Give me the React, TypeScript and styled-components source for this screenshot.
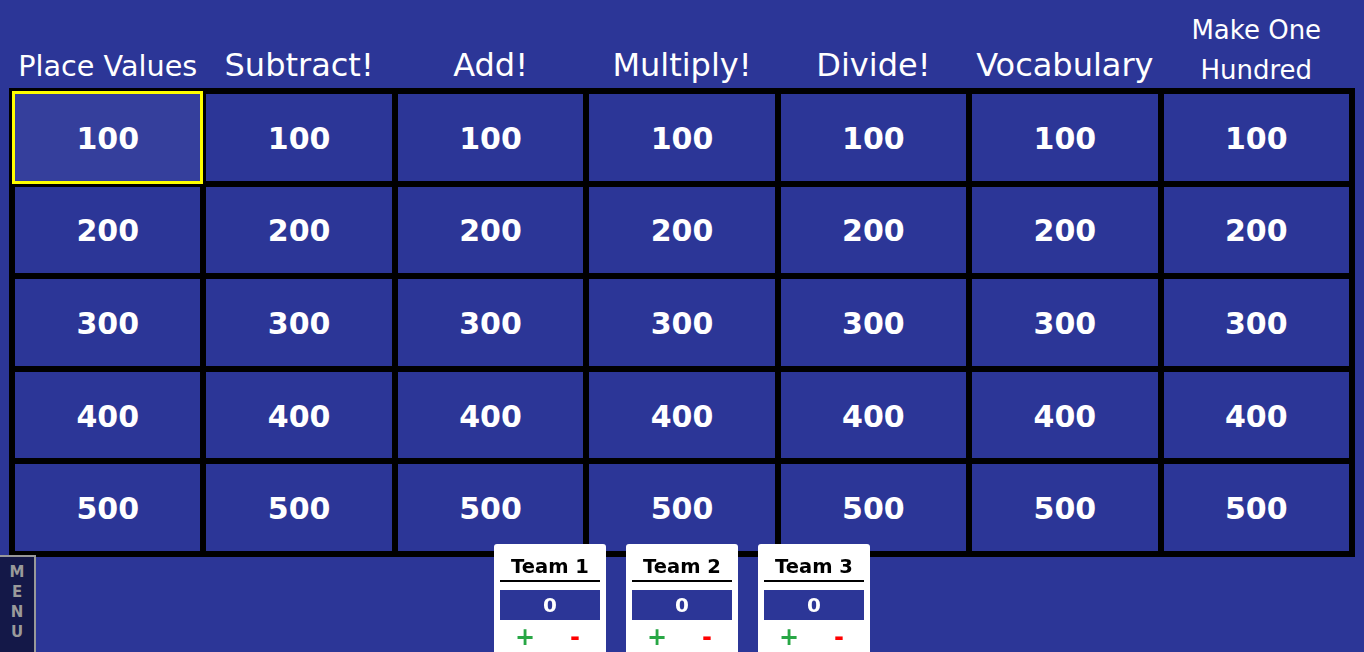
import React from "react";
import styled, { createGlobalStyle } from "styled-components";

const BG = "#2c3697";

const Global = createGlobalStyle`
  html, body {
    margin: 0;
    padding: 0;
    background: ${BG};
    overflow: hidden;
    font-family: "DejaVu Sans", Verdana, sans-serif;
  }
`;

const Page = styled.div`
  width: 1364px;
  height: 652px;
  padding: 0 9px;
  box-sizing: border-box;
  display: flex;
  flex-direction: column;
`;

const HeaderRow = styled.div`
  height: 88px;
  padding: 0 3px;
  display: grid;
  grid-template-columns: repeat(7, 1fr);
`;

const HeaderCell = styled.div`
  display: flex;
  align-items: flex-end;
  justify-content: center;
  text-align: center;
  color: #fff;
  padding: 0 4px;
  min-width: 0;
`;

const HeaderText = styled.span<{ $size: number; $lh: number; $mb: number }>`
  font-size: ${(p) => p.$size}px;
  line-height: ${(p) => p.$lh}px;
  margin-bottom: ${(p) => p.$mb}px;
`;

const Board = styled.div`
  height: 469px;
  box-sizing: border-box;
  border: 3px solid #000;
  display: grid;
  grid-template-columns: repeat(7, 1fr);
  grid-template-rows: repeat(5, 1fr);
`;

const Cell = styled.div<{ $selected?: boolean }>`
  border: 3px solid ${(p) => (p.$selected ? "#ffff00" : "#000")};
  background: ${(p) => (p.$selected ? "#353f9c" : BG)};
  display: flex;
  align-items: center;
  justify-content: center;
  color: #fff;
  font-weight: bold;
  font-size: 30px;
  padding-top: 2px;
  min-width: 0;
`;

const Teams = styled.div`
  position: fixed;
  left: 0;
  right: 0;
  top: 544px;
  display: flex;
  justify-content: center;
  gap: 20px;
`;

const TeamCard = styled.div`
  width: 112px;
  height: 130px;
  box-sizing: border-box;
  background: #fff;
  border-radius: 3px 3px 0 0;
  padding: 10px 6px 6px;
  display: flex;
  flex-direction: column;
`;

const TeamName = styled.div`
  font-weight: bold;
  font-size: 19.5px;
  line-height: 26px;
  color: #000;
  text-align: center;
  border-bottom: 2px solid #000;
`;

const Score = styled.div`
  margin-top: 8px;
  height: 30px;
  line-height: 30px;
  background: ${BG};
  color: #fff;
  font-weight: bold;
  font-size: 20px;
  text-align: center;
`;

const Controls = styled.div`
  margin-top: 3px;
  display: flex;
`;

const Adjust = styled.span<{ $color: string }>`
  flex: 1;
  text-align: center;
  font-weight: bold;
  font-size: 24px;
  line-height: 28px;
  color: ${(p) => p.$color};
`;

const MenuTab = styled.div`
  position: fixed;
  left: 0;
  top: 555px;
  bottom: 0;
  width: 34px;
  background: #141848;
  border-top: 2px solid #999;
  border-right: 2px solid #999;
  display: flex;
  flex-direction: column;
  align-items: center;
  padding-top: 5px;
  color: #9a9a9a;
  font-weight: bold;
  font-size: 15px;
  line-height: 20px;
`;

const categories = [
  { name: "Place Values", size: 28.7, lh: 36, mb: 4 },
  { name: "Subtract!", size: 32, lh: 36, mb: 5 },
  { name: "Add!", size: 32, lh: 36, mb: 5 },
  { name: "Multiply!", size: 32, lh: 36, mb: 5 },
  { name: "Divide!", size: 32, lh: 36, mb: 5 },
  { name: "Vocabulary", size: 32, lh: 36, mb: 5 },
  { name: "Make One Hundred", size: 26, lh: 40, mb: -2 },
];

const values = [100, 200, 300, 400, 500];

export default function App() {
  return (
    <>
      <Global />
      <Page>
        <HeaderRow>
          {categories.map((c) => (
            <HeaderCell key={c.name}>
              <HeaderText $size={c.size} $lh={c.lh} $mb={c.mb}>
                {c.name}
              </HeaderText>
            </HeaderCell>
          ))}
        </HeaderRow>
        <Board>
          {values.map((v, r) =>
            categories.map((c, i) => (
              <Cell key={`${r}-${i}`} $selected={r === 0 && i === 0}>
                {v}
              </Cell>
            ))
          )}
        </Board>
      </Page>
      <Teams>
        {[1, 2, 3].map((t) => (
          <TeamCard key={t}>
            <TeamName>Team {t}</TeamName>
            <Score>0</Score>
            <Controls>
              <Adjust $color="#28a745">+</Adjust>
              <Adjust $color="#ff0000">-</Adjust>
            </Controls>
          </TeamCard>
        ))}
      </Teams>
      <MenuTab>
        {"MENU".split("").map((l) => (
          <span key={l}>{l}</span>
        ))}
      </MenuTab>
    </>
  );
}
